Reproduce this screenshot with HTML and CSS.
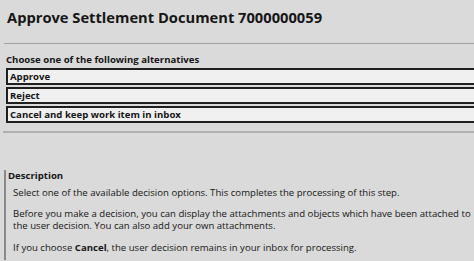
FILE: index.html
```html
<!DOCTYPE html>
<html>
<head>
<meta charset="utf-8">
<link rel="stylesheet" href="styles.css">
</head>
<body>
<div class="page">
  <div class="header">
    <h1 class="title">Approve Settlement Document 7000000059</h1>
  </div>
  <div class="decisions">
    <div class="label">Choose one of the following alternatives</div>
    <div class="options">
      <div class="option">Approve</div>
      <div class="option">Reject</div>
      <div class="option">Cancel and keep work item in inbox</div>
    </div>
  </div>
  <div class="description">
    <div class="desc-title">Description</div>
    <p class="desc-p">Select one of the available decision options. This completes the processing of this step.</p>
    <p class="desc-p">Before you make a decision, you can display the attachments and objects which have been attached to the user decision. You can also add your own attachments.</p>
    <p class="desc-p">If you choose <b>Cancel</b>, the user decision remains in your inbox for processing.</p>
  </div>
</div>
</body>
</html>
```

FILE: styles.css
```css
html, body {
  margin: 0;
  padding: 0;
  background: #dadada;
}
body {
  font-family: "Open Sans", "Noto Sans", sans-serif;
  color: #161616;
  width: 474px;
  height: 261px;
  overflow: hidden;
}
.page {
  display: flex;
  flex-direction: column;
}
.header {
  margin-left: 4px;
  height: 43px;
  border-bottom: 1px solid #a0a0a0;
}
.title {
  margin: 0;
  padding: 7px 0 0 3px;
  font-size: 14.7px;
  font-weight: 700;
  line-height: 20px;
}
.decisions {
  margin-left: 3px;
  padding: 9px 0 8px 3px;
  border-bottom: 2px solid #b0b0b0;
}
.label {
  font-size: 9.6px;
  font-weight: 700;
  line-height: 14px;
}
.options {
  display: flex;
  flex-direction: column;
  gap: 2px;
  margin-top: 1px;
}
.option {
  height: 13px;
  line-height: 13px;
  background: #f0f0f0;
  border: 2px solid #1f1f1f;
  border-right: none;
  padding-left: 2px;
  font-size: 9.6px;
  font-weight: 700;
}
.description {
  margin: 37px 0 0 4px;
  border-left: 2px solid #8a8a8a;
  padding: 0 0 6px 2px;
  font-size: 9.6px;
}
.desc-title {
  font-weight: 700;
  line-height: 12px;
}
.desc-p {
  margin: 5px 0 9px 5px;
  line-height: 12px;
}
.desc-p + .desc-p {
  margin-top: 0;
}
.desc-p:last-child {
  margin-top: 10px;
  margin-bottom: 0;
}
```
